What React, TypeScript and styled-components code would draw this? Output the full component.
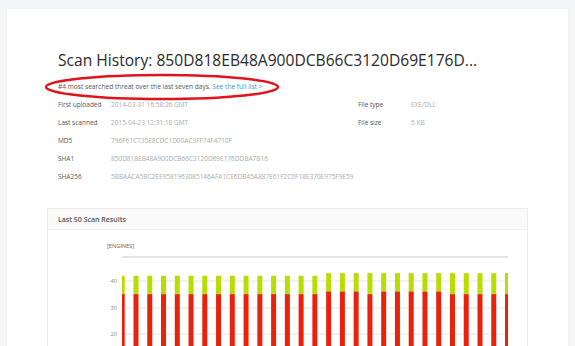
import React from 'react';
import styled, { createGlobalStyle } from 'styled-components';

const GlobalStyle = createGlobalStyle`
  html, body {
    margin: 0;
    padding: 0;
    background: #f4f5f7;
    font-family: 'Open Sans', 'Liberation Sans', sans-serif;
    overflow: hidden;
  }
`;

const Page = styled.div`
  padding: 9px 7px 0;
  height: 346px;
  box-sizing: border-box;
`;

const Card = styled.div`
  background: #fff;
  height: 100%;
  padding: 40px 40px 0;
  box-sizing: border-box;
  box-shadow: 0 0 1px rgba(0, 0, 0, 0.08);
`;

const Intro = styled.div`
  padding-left: 11px;
`;

const Title = styled.h1`
  margin: 0;
  font-size: 15.6px;
  font-weight: 400;
  line-height: 22px;
  color: #2a2a2a;
  white-space: nowrap;
`;

const Highlight = styled.div`
  position: relative;
  margin-top: 11px;
  height: 10px;
`;

const Subtitle = styled.p`
  margin: 0;
  font-size: 6.6px;
  line-height: 10px;
  color: #555;
  white-space: nowrap;

  a {
    color: #3a9ad9;
    text-decoration: none;
  }
`;

const Ellipse = styled.svg`
  position: absolute;
  left: -14px;
  top: -9px;
  overflow: visible;
  pointer-events: none;
`;

const MetaGrid = styled.div`
  display: grid;
  grid-template-columns: 53px 247px 53px 1fr;
  grid-auto-rows: 18px;
  align-items: center;
  margin-top: 3px;
  font-size: 6.5px;
  white-space: nowrap;
`;

const Label = styled.span`
  color: #555;
`;

const Value = styled.span<{ $wide?: boolean }>`
  color: #ababab;
  grid-column: ${(p) => (p.$wide ? '2 / -1' : 'auto')};
`;

const Panel = styled.section`
  margin-top: 23px;
  border: 1px solid #ececec;
  border-bottom: none;
`;

const PanelHeader = styled.header`
  height: 20px;
  display: flex;
  align-items: center;
  padding-left: 10px;
  background: #fafafa;
  border-bottom: 1px solid #efefef;
  font-size: 7px;
  font-weight: 600;
  color: #555;
`;

const Chart = styled.svg`
  display: block;
  font-family: 'Open Sans', 'Liberation Sans', sans-serif;
`;

const scaleY = (v: number) => 51 - (v - 40) * 2.63;

const bars = Array.from({ length: 29 }, (_, k) => {
  const i = k - 1;
  const total = i >= 14 ? 43 : 42;
  const red = [14, 15, 16, 18, 19, 20, 21, 22].includes(i) ? 36 : 35;
  return { x: 85.5 + 13.76 * i, total, red };
});

const ScanChart = () => (
  <Chart width="479" height="116" viewBox="0 0 479 116">
    <defs>
      <clipPath id="plot">
        <rect x="74" y="0" width="386" height="116" />
      </clipPath>
    </defs>
    <text x="59" y="18" fontSize="5.6" fill="#666">
      [ENGINES]
    </text>
    <line x1="74" x2="460" y1="27" y2="27" stroke="#dcdcdc" strokeWidth="1.5" />
    {[40, 30, 20].map((v, n) => {
      const y = [51, 78, 104][n];
      return (
        <g key={v}>
          <line x1="74" x2="460" y1={y} y2={y} stroke="#e6e6e6" strokeWidth="1.2" />
          <text x="69" y={y + 1.5} fontSize="5.6" fill="#888" textAnchor="end">
            {v}
          </text>
        </g>
      );
    })}
    <g clipPath="url(#plot)">
      {bars.map((b, n) => (
        <g key={n}>
          <rect x={b.x} y={scaleY(b.total)} width="5" height={scaleY(b.red) - scaleY(b.total)} fill="#b9dc02" />
          <rect x={b.x} y={scaleY(b.red)} width="5" height={120} fill="#e8220d" />
        </g>
      ))}
    </g>
  </Chart>
);

export default function App() {
  return (
    <>
      <GlobalStyle />
      <Page>
        <Card>
          <Intro>
            <Title>Scan History: 850D818EB48A900DCB66C3120D69E176D...</Title>
            <Highlight>
              <Subtitle>
                #4 most searched threat over the last seven days. <a href="#">See the full list &gt;</a>
              </Subtitle>
              <Ellipse width="236" height="28" viewBox="0 0 236 28">
                <ellipse cx="118" cy="14" rx="116" ry="12" fill="none" stroke="#e0141c" strokeWidth="2.5" />
              </Ellipse>
            </Highlight>
            <MetaGrid>
              <Label>First uploaded</Label>
              <Value>2014-03-31 16:58:26 GMT</Value>
              <Label>File type</Label>
              <Value>EXE/DLL</Value>
              <Label>Last scanned</Label>
              <Value>2015-04-23 12:31:18 GMT</Value>
              <Label>File size</Label>
              <Value>5 KB</Value>
              <Label>MD5</Label>
              <Value $wide>796F61C735E8CDC1D00AC3FF74F4710F</Value>
              <Label>SHA1</Label>
              <Value $wide>850D818EB48A900DCB66C3120D69E176DDBA7B16</Value>
              <Label>SHA256</Label>
              <Value $wide>5BBAACA5BC2EE9581963085146AFA1CE6DB45A887E61F2C0F18E370E975F9E59</Value>
            </MetaGrid>
          </Intro>
          <Panel>
            <PanelHeader>Last 50 Scan Results</PanelHeader>
            <ScanChart />
          </Panel>
        </Card>
      </Page>
    </>
  );
}
